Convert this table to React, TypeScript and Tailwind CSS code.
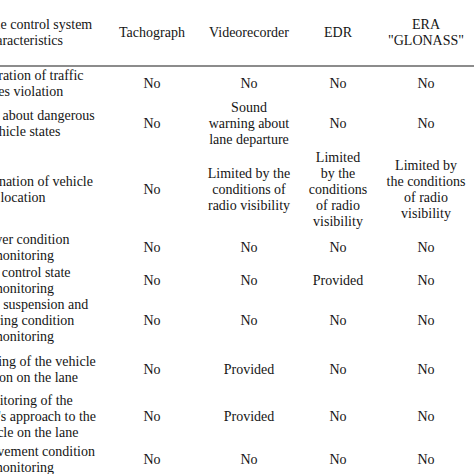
import type { ReactNode } from 'react';

type Row = {
  h: string;
  label: ReactNode;
  cells: string[][];
};

const rows: Row[] = [
  {
    h: 'h-[33px]',
    label: (
      <>
        <span>Registration of traffic</span>
        <span>rules violation</span>
      </>
    ),
    cells: [['No'], ['No'], ['No'], ['No']],
  },
  {
    h: 'h-[48px]',
    label: (
      <>
        <span>Warning about dangerous</span>
        <span>vehicle states</span>
      </>
    ),
    cells: [['No'], ['Sound', 'warning about', 'lane departure'], ['No'], ['No']],
  },
  {
    h: 'h-[84px]',
    label: (
      <>
        <span>Determination of vehicle</span>
        <span>location</span>
      </>
    ),
    cells: [
      ['No'],
      ['Limited by the', 'conditions of', 'radio visibility'],
      ['Limited', 'by the', 'conditions', 'of radio', 'visibility'],
      ['Limited by', 'the conditions', 'of radio', 'visibility'],
    ],
  },
  {
    h: 'h-[32px]',
    label: (
      <>
        <span>Driver condition</span>
        <span>monitoring</span>
      </>
    ),
    cells: [['No'], ['No'], ['No'], ['No']],
  },
  {
    h: 'h-[33px]',
    label: (
      <>
        <span>Tire control state</span>
        <span>monitoring</span>
      </>
    ),
    cells: [['No'], ['No'], ['Provided'], ['No']],
  },
  {
    h: 'h-[48px]',
    label: (
      <>
        <span>Vehicle suspension and</span>
        <span className="pl-[2px]">steering condition</span>
        <span>monitoring</span>
      </>
    ),
    cells: [['No'], ['No'], ['No'], ['No']],
  },
  {
    h: 'h-[50px]',
    label: (
      <>
        <span className="pl-[2px]">Monitoring of the vehicle</span>
        <span>position on the lane</span>
      </>
    ),
    cells: [['No'], ['Provided'], ['No'], ['No']],
  },
  {
    h: 'h-[43px]',
    label: (
      <>
        <span>Monitoring of the</span>
        <span className="pl-[8px]">vehicle's approach to the</span>
        <span>obstacle on the lane</span>
      </>
    ),
    cells: [['No'], ['Provided'], ['No'], ['No']],
  },
  {
    h: 'h-[44px]',
    label: (
      <>
        <span>Road pavement condition</span>
        <span>monitoring</span>
      </>
    ),
    cells: [['No'], ['No'], ['No'], ['No']],
  },
];

const widths = ['w-[88px]', 'w-[106px]', 'w-[72px]', 'w-[104px]'];

const cell = 'flex shrink-0 flex-col items-center justify-center text-center whitespace-nowrap';

export default function App() {
  return (
    <div className="h-[474px] w-[474px] overflow-hidden bg-white font-[family-name:'Liberation_Serif','Times_New_Roman',serif] text-[14px] leading-[16px] text-[#151515]">
      <div className="-ml-[62px] w-[540px]">
        {/* Header */}
        <div className="flex h-[65px] pt-[1px]">
          <div className={`${cell} w-[170px]`}>
            <span className="pl-[11px]">Vehicle control system</span>
            <span>characteristics</span>
          </div>
          <div className={`${cell} ${widths[0]}`}>Tachograph</div>
          <div className={`${cell} ${widths[1]}`}>Videorecorder</div>
          <div className={`${cell} ${widths[2]}`}>EDR</div>
          <div className={`${cell} ${widths[3]}`}>
            <span>ERA</span>
            <span>"GLONASS"</span>
          </div>
        </div>
        <div className="h-[2px] bg-[#8c8c8c]" />

        {/* Body */}
        {rows.map((row, i) => (
          <div key={i} className={`flex ${row.h}`}>
            <div className={`${cell} w-[170px]`}>{row.label}</div>
            {row.cells.map((lines, j) => (
              <div key={j} className={`${cell} ${widths[j]}`}>
                {lines.map((line, k) => (
                  <span key={k}>{line}</span>
                ))}
              </div>
            ))}
          </div>
        ))}
      </div>
    </div>
  );
}
